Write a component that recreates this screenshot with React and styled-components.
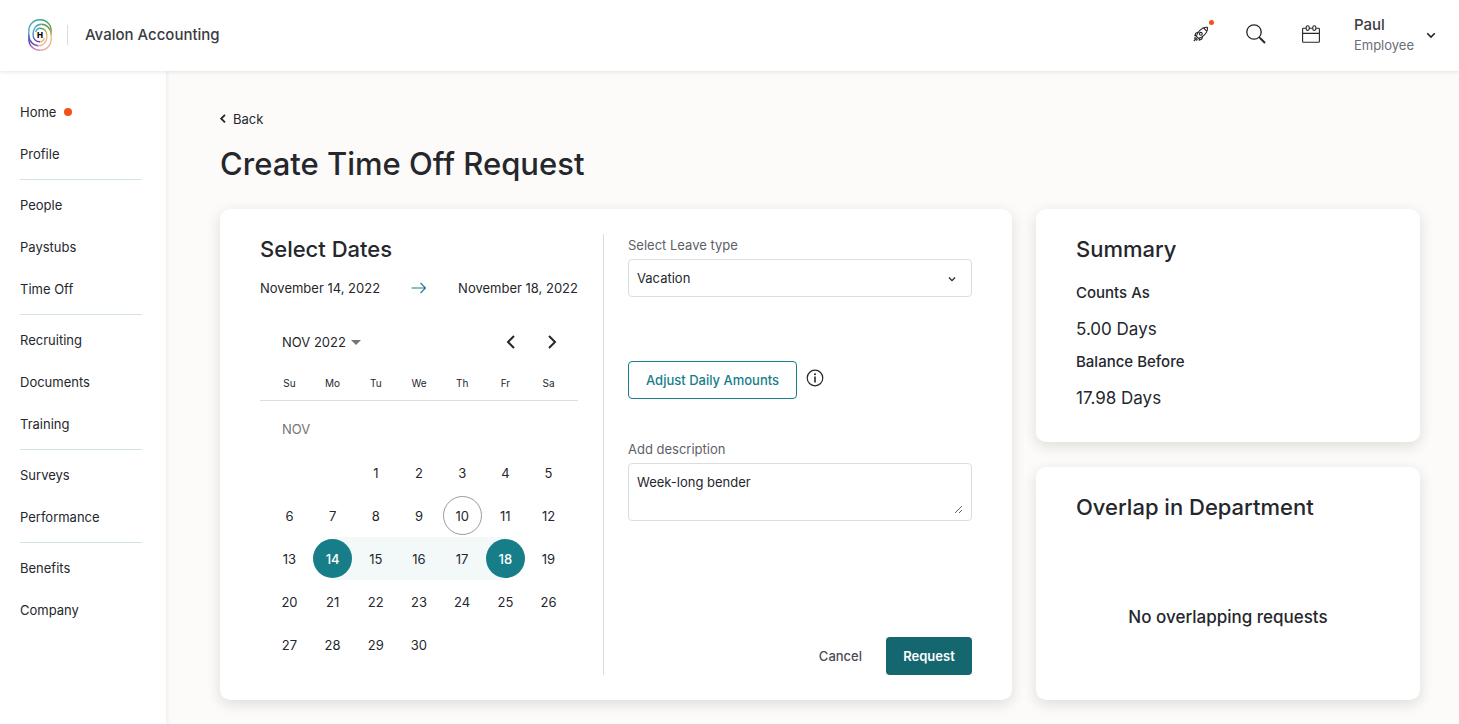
import React from 'react';
import styled, { createGlobalStyle } from 'styled-components';

const GlobalStyle = createGlobalStyle`
  *, *::before, *::after {
    box-sizing: border-box;
  }

  body {
    margin: 0;
    background: #fcfbf9;
    color: #25272d;
    font-family: Inter, "Liberation Sans", sans-serif;
    font-size: 13px;
    line-height: 20px;
  }

  button, select, textarea {
    font: inherit;
    color: inherit;
  }
`;

const navGroups = [
  [{ name: 'Home', unread: true }, { name: 'Profile' }],
  [{ name: 'People' }, { name: 'Paystubs' }, { name: 'Time Off' }],
  [{ name: 'Recruiting' }, { name: 'Documents' }, { name: 'Training' }],
  [{ name: 'Surveys' }, { name: 'Performance' }],
  [{ name: 'Benefits' }, { name: 'Company' }],
];

const weekdays = ['Su', 'Mo', 'Tu', 'We', 'Th', 'Fr', 'Sa'];

const weeks = [
  [null, null, 1, 2, 3, 4, 5],
  [6, 7, 8, 9, 10, 11, 12],
  [13, 14, 15, 16, 17, 18, 19],
  [20, 21, 22, 23, 24, 25, 26],
  [27, 28, 29, 30, null, null, null],
];

const today = 10;

function Chevron({ size = 10, direction = 'down', weight = 1.6 }) {
  const paths = {
    down: 'M1.2 3.2 L5 7 L8.8 3.2',
    left: 'M5 0.8 L1.2 4.6 L5 8.4',
  };
  return (
    <svg width={size} height={size} viewBox="0 0 10 10" fill="none" stroke="currentColor" strokeWidth={weight} aria-hidden="true">
      <path d={paths[direction]} />
    </svg>
  );
}

function Logo() {
  return (
    <svg width="24" height="32" viewBox="0 0 24 32" fill="none" strokeWidth="1.4" role="img" aria-label="Logo">
      <defs>
        <linearGradient id="logo-left" gradientUnits="userSpaceOnUse" x1="0" y1="0" x2="4" y2="32">
          <stop offset="0" stopColor="#35a79c" />
          <stop offset="0.4" stopColor="#4fa9cc" />
          <stop offset="0.72" stopColor="#5540b8" />
          <stop offset="1" stopColor="#d58fc4" />
        </linearGradient>
        <linearGradient id="logo-right" gradientUnits="userSpaceOnUse" x1="12" y1="0" x2="14" y2="32">
          <stop offset="0" stopColor="#2fa58c" />
          <stop offset="0.3" stopColor="#6e9a4a" />
          <stop offset="0.55" stopColor="#f0bd78" />
          <stop offset="1" stopColor="#f0a0b0" />
        </linearGradient>
      </defs>
      <path stroke="url(#logo-left)" d="M12 0.8 C5.5 0.8 0.8 5.5 0.8 12 V20 C0.8 26.5 5.5 31.2 12 31.2" />
      <path stroke="url(#logo-right)" d="M12 0.8 C18.5 0.8 23.2 5.5 23.2 12 V20 C23.2 26.5 18.5 31.2 12 31.2" />
      <path stroke="url(#logo-left)" d="M13.4 5.2 C8.4 5.2 5 9.6 5 15 C5 20 8 22.8 12 22.8" />
      <path stroke="url(#logo-right)" d="M13.4 5.2 C18.5 5.2 23.2 9.5 23.2 16" />
      <path stroke="url(#logo-left)" d="M0.8 16 C0.8 22.5 5.5 26.8 10.6 26.8" />
      <path stroke="url(#logo-right)" d="M10.6 26.8 C15.6 26.8 19 22.4 19 17 C19 12 16 9.2 12 9.2" />
      <path stroke="url(#logo-left)" d="M12 9.2 C9.6 9.2 8.2 10.8 7.8 13" />
      <path stroke="url(#logo-right)" d="M12 22.8 C14.4 22.8 15.8 21.2 16.2 19" />
      <text x="12" y="19" fill="#000" fontSize="8" fontWeight="800" textAnchor="middle">H</text>
    </svg>
  );
}

function RocketIcon() {
  return (
    <svg width="16" height="16" viewBox="0 0 16 16" fill="none" stroke="#25272d" strokeWidth="1.1" strokeLinejoin="round" aria-hidden="true">
      <path d="M14.4 1.4 C11.6 0.9 9 2.2 6.6 4.6 C4.8 6.4 3.8 8.2 3.4 10.4 L5.4 12.4 C7.6 12 9.4 11 11.2 9.2 C13.6 6.8 14.9 4.2 14.4 1.4 Z" />
      <path d="M10.6 2 L13.8 5.2 M5.2 6.2 L2.8 7.2 L1.8 9.8 L3.6 9.6 M9.6 10.6 L8.8 13 L6.2 14.2 L6.4 12.2" />
      <circle cx="7.8" cy="7.8" r="1.4" />
      <path d="M2.6 11.2 L1.2 12.6 M3.8 12 L0.8 15 M4.6 13.2 L3.2 14.6" />
    </svg>
  );
}

function SearchIcon() {
  return (
    <svg width="20" height="20" viewBox="0 0 20 20" fill="none" stroke="#25272d" aria-hidden="true">
      <circle cx="8" cy="8" r="7.2" strokeWidth="1.3" />
      <path d="M13 13 L14.4 14.4" strokeWidth="1.3" />
      <path d="M14 14 L19 19" strokeWidth="2" />
    </svg>
  );
}

function CalendarIcon() {
  return (
    <svg width="18" height="18" viewBox="0 0 18 18" fill="none" stroke="#25272d" strokeWidth="1.1" aria-hidden="true">
      <path d="M4 3.2 H1.4 A0.8 0.8 0 0 0 0.6 4 V16.4 A0.8 0.8 0 0 0 1.4 17.2 H16.6 A0.8 0.8 0 0 0 17.4 16.4 V4 A0.8 0.8 0 0 0 16.6 3.2 H14 M7.2 3.2 H10.8 M0.6 8.4 H17.4" />
      <rect x="4.2" y="0.8" width="3" height="4.6" rx="1.5" />
      <rect x="10.8" y="0.8" width="3" height="4.6" rx="1.5" />
    </svg>
  );
}

function InfoIcon() {
  return (
    <svg width="18" height="18" viewBox="0 0 18 18" fill="none" stroke="#25272d" aria-hidden="true">
      <circle cx="9" cy="9" r="7.8" strokeWidth="1.2" />
      <path d="M9 7.4 V13.4" strokeWidth="1.6" />
      <circle cx="9" cy="5.2" r="1" fill="#25272d" stroke="none" />
    </svg>
  );
}

function DateCalendar({ start, end, onPick }) {
  return (
    <Calendar>
      <CalendarBar>
        <PeriodButton type="button">
          NOV 2022
          <svg width="10" height="5" viewBox="0 0 10 5" aria-hidden="true"><path d="M0 0 H10 L5 5 Z" fill="#757575" /></svg>
        </PeriodButton>
        <StepButton type="button" aria-label="Previous month">
          <svg width="10" height="14" viewBox="0 0 10 14" fill="none" stroke="currentColor" strokeWidth="2" aria-hidden="true"><path d="M8 1 L2 7 L8 13" /></svg>
        </StepButton>
        <StepButton type="button" aria-label="Next month">
          <svg width="10" height="14" viewBox="0 0 10 14" fill="none" stroke="currentColor" strokeWidth="2" aria-hidden="true"><path d="M2 1 L8 7 L2 13" /></svg>
        </StepButton>
      </CalendarBar>
      <Days>
        <thead>
          <tr>
            {weekdays.map((day) => <Weekday key={day} scope="col">{day}</Weekday>)}
          </tr>
        </thead>
        <tbody>
          <tr>
            <MonthLabel colSpan={7}><span>NOV</span></MonthLabel>
          </tr>
          {weeks.map((week, index) => (
            <tr key={index}>
              {week.map((day, column) => (
                <DayCell
                  key={column}
                  $inRange={day > start && day < end}
                  $first={day === start && start !== end}
                  $last={day === end && start !== end}
                >
                  {day && (
                    <DayButton
                      type="button"
                      $selected={day === start || day === end}
                      $today={day === today}
                      onClick={() => onPick(day)}
                    >
                      {day}
                    </DayButton>
                  )}
                </DayCell>
              ))}
            </tr>
          ))}
        </tbody>
      </Days>
    </Calendar>
  );
}

function App() {
  const [range, setRange] = React.useState({ start: 14, end: 18 });
  const [leaveType, setLeaveType] = React.useState('Vacation');
  const [description, setDescription] = React.useState('Week-long bender');
  const id = React.useId();

  const handlePick = function(day) {
    if (range.start === range.end && day > range.start) {
      setRange({ start: range.start, end: day });
    } else {
      setRange({ start: day, end: day });
    }
  };

  return (
    <>
      <GlobalStyle />
      <Page>
        <Header>
          <Logo />
          <Company>Avalon Accounting</Company>
          <Tools>
            <IconButton type="button" aria-label="What's new">
              <RocketIcon />
              <Badge />
            </IconButton>
            <IconButton type="button" aria-label="Search"><SearchIcon /></IconButton>
            <IconButton type="button" aria-label="Calendar"><CalendarIcon /></IconButton>
          </Tools>
          <Account type="button">
            <span>
              <AccountName>Paul</AccountName>
              <AccountRole>Employee</AccountRole>
            </span>
            <Chevron />
          </Account>
        </Header>

        <Body>
          <Sidebar>
            {navGroups.map((group, index) => (
              <NavGroup key={index}>
                {group.map((item) => (
                  <NavLink key={item.name} href="#">
                    {item.name}
                    {item.unread && <Dot />}
                  </NavLink>
                ))}
              </NavGroup>
            ))}
          </Sidebar>

          <Main>
            <BackLink href="#">
              <Chevron size={10} direction="left" weight={1.8} />
              Back
            </BackLink>
            <Title>Create Time Off Request</Title>

            <Columns>
              <RequestCard>
                <DatesPane>
                  <CardTitle>Select Dates</CardTitle>
                  <DateRange>
                    <span>November {range.start}, 2022</span>
                    <svg width="16" height="12" viewBox="0 0 16 12" fill="none" stroke="#177e89" strokeWidth="1.1" aria-hidden="true">
                      <path d="M0.5 6 H14.5 M9.5 1 L14.5 6 L9.5 11" />
                    </svg>
                    <span>November {range.end}, 2022</span>
                  </DateRange>
                  <DateCalendar start={range.start} end={range.end} onPick={handlePick} />
                </DatesPane>

                <DetailsPane onSubmit={(e) => e.preventDefault()}>
                  <Label htmlFor={`${id}-type`}>Select Leave type</Label>
                  <SelectBox>
                    <Select id={`${id}-type`} value={leaveType} onChange={(e) => setLeaveType(e.target.value)}>
                      <option>Vacation</option>
                      <option>Sick</option>
                      <option>Personal</option>
                    </Select>
                    <SelectArrow><Chevron size={8} /></SelectArrow>
                  </SelectBox>
                  <AdjustRow>
                    <OutlineButton type="button">Adjust Daily Amounts</OutlineButton>
                    <InfoButton type="button" aria-label="About daily amounts"><InfoIcon /></InfoButton>
                  </AdjustRow>
                  <Label htmlFor={`${id}-description`}>Add description</Label>
                  <TextBox>
                    <TextArea
                      id={`${id}-description`}
                      value={description}
                      onChange={(e) => setDescription(e.target.value)}
                    />
                  </TextBox>
                  <Actions>
                    <CancelButton type="button">Cancel</CancelButton>
                    <SubmitButton type="submit">Request</SubmitButton>
                  </Actions>
                </DetailsPane>
              </RequestCard>

              <SideColumn>
                <SideCard>
                  <CardTitle>Summary</CardTitle>
                  <Stats>
                    <dt>Counts As</dt>
                    <dd>5.00 Days</dd>
                    <dt>Balance Before</dt>
                    <dd>17.98 Days</dd>
                  </Stats>
                </SideCard>
                <SideCard>
                  <CardTitle>Overlap in Department</CardTitle>
                  <Empty>No overlapping requests</Empty>
                </SideCard>
              </SideColumn>
            </Columns>
          </Main>
        </Body>
      </Page>
    </>
  );
}

const Page = styled.div`
  display: flex;
  flex-direction: column;
  min-height: 100vh;
`;

const Header = styled.header`
  position: relative;
  z-index: 2;
  display: flex;
  align-items: center;
  height: 71px;
  padding: 0 23px 2px 28px;
  background: #fff;
  box-shadow: 0 1px 4px rgba(40, 36, 30, 0.12);
`;

const Company = styled.div`
  margin-left: 15px;
  padding-left: 17px;
  border-left: 1px solid #dcdcdf;
  color: #3a3b43;
  font-size: 15px;
  font-weight: 500;
`;

const Tools = styled.div`
  display: flex;
  gap: 31px;
  margin-left: auto;
  padding-bottom: 2px;
`;

const IconButton = styled.button`
  position: relative;
  display: flex;
  align-items: center;
  justify-content: center;
  width: 24px;
  height: 24px;
  padding: 0;
  border: 0;
  background: none;
  cursor: pointer;
`;

const Badge = styled.span`
  position: absolute;
  top: -2px;
  right: -1px;
  width: 5px;
  height: 5px;
  border-radius: 50%;
  background: #f1511b;
`;

const Account = styled.button`
  display: flex;
  align-items: center;
  justify-content: space-between;
  gap: 12px;
  margin-left: 31px;
  padding: 0;
  border: 0;
  background: none;
  text-align: left;
  cursor: pointer;
`;

const AccountName = styled.span`
  display: block;
  font-size: 15px;
  font-weight: 500;
  color: #3a3b43;
`;

const AccountRole = styled.span`
  display: block;
  color: #6b6d7a;
`;

const Body = styled.div`
  display: flex;
  flex: 1;
`;

const Sidebar = styled.nav`
  flex: 0 0 166px;
  padding: 20px 24px 20px 20px;
  background: #fff;
  box-shadow: 1px 0 4px rgba(40, 36, 30, 0.08);
`;

const NavGroup = styled.div`
  & + & {
    margin-top: 4px;
    padding-top: 4px;
    border-top: 1px solid #d3e4e5;
  }
`;

const NavLink = styled.a`
  display: flex;
  align-items: center;
  gap: 8px;
  height: 42px;
  color: inherit;
  text-decoration: none;
`;

const Dot = styled.span`
  width: 8px;
  height: 8px;
  border-radius: 50%;
  background: #f1511b;
`;

const Main = styled.main`
  flex: 1;
  min-width: 0;
  padding: 38px 39px 24px 54px;
`;

const BackLink = styled.a`
  display: inline-flex;
  align-items: center;
  gap: 3px;
  color: inherit;
  text-decoration: none;
`;

const Title = styled.h1`
  margin: 15px 0 25px;
  font-size: 31px;
  font-weight: 500;
  line-height: 40px;
`;

const Columns = styled.div`
  display: grid;
  grid-template-columns: repeat(12, 1fr);
  gap: 24px;
`;

const Card = styled.section`
  border-radius: 10px;
  background: #fff;
  box-shadow: 0 4px 14px rgba(40, 36, 30, 0.14);
`;

const RequestCard = styled(Card)`
  grid-column: span 8;
  display: flex;
  padding: 25px 40px;
`;

const DatesPane = styled.div`
  flex: 0 0 343px;
  padding-right: 25px;
`;

const CardTitle = styled.h2`
  margin: 0;
  font-size: 22px;
  font-weight: 500;
  line-height: 30px;
`;

const DateRange = styled.div`
  display: flex;
  align-items: center;
  justify-content: space-between;
  margin-top: 14px;
`;

const Calendar = styled.div`
  margin: 24px 0 9px;
`;

const CalendarBar = styled.div`
  display: flex;
  align-items: center;
  height: 40px;
  padding: 0 6px 0 22px;
`;

const PeriodButton = styled.button`
  display: flex;
  align-items: center;
  gap: 5px;
  margin-right: auto;
  padding: 0;
  border: 0;
  background: none;
  cursor: pointer;
`;

const StepButton = styled.button`
  display: flex;
  align-items: center;
  justify-content: center;
  width: 41px;
  height: 40px;
  padding: 0;
  border: 0;
  background: none;
  cursor: pointer;
`;

const Days = styled.table`
  width: 100%;
  border-collapse: separate;
  border-spacing: 0;
  table-layout: fixed;

  thead th {
    border-bottom: 1px solid #dedede;
  }

  th:first-child, td:first-child {
    padding-left: 8px;
  }

  th:last-child, td:last-child {
    padding-right: 8px;
  }
`;

const Weekday = styled.th`
  height: 39px;
  padding: 0 0 10px;
  font-size: 10px;
  font-weight: 400;
  line-height: 14px;
  vertical-align: bottom;

  &:first-child, &:last-child {
    width: 51px;
  }
`;

const MonthLabel = styled.td`
  height: 50px;
  padding: 6px 0 0;
  color: #757575;

  span {
    margin-left: 14px;
  }
`;

const rangeColor = '#f3f8f9';

const DayCell = styled.td`
  height: 43px;
  padding: 0;
  text-align: center;
  background: ${({ $inRange, $first, $last }) => {
    if ($first) return `linear-gradient(to right, transparent 50%, ${rangeColor} 50%)`;
    if ($last) return `linear-gradient(to left, transparent 50%, ${rangeColor} 50%)`;
    return $inRange ? rangeColor : 'none';
  }};
`;

const DayButton = styled.button`
  width: 39px;
  height: 39px;
  padding: 0;
  border: 1px solid ${({ $today }) => ($today ? '#9b9b9b' : 'transparent')};
  border-radius: 50%;
  background: ${({ $selected }) => ($selected ? '#177e89' : 'none')};
  color: ${({ $selected }) => ($selected ? '#fff' : 'inherit')};
  font-weight: ${({ $selected }) => ($selected ? 500 : 400)};
  cursor: pointer;
`;

const DetailsPane = styled.form`
  display: flex;
  flex: 1;
  flex-direction: column;
  min-width: 0;
  padding-left: 24px;
  border-left: 1px solid #dcdcdc;
`;

const Label = styled.label`
  margin: 1px 0 4px;
  color: #5c5f6a;
`;

const SelectBox = styled.div`
  position: relative;
`;

const Select = styled.select`
  width: 100%;
  height: 38px;
  padding: 0 32px 0 8px;
  border: 1px solid #dcdddf;
  border-radius: 4px;
  background: #fff;
  appearance: none;
`;

const SelectArrow = styled.span`
  position: absolute;
  top: 16px;
  right: 16px;
  display: flex;
  pointer-events: none;
`;

const AdjustRow = styled.div`
  display: flex;
  align-items: flex-start;
  gap: 9px;
  margin: 64px 0 39px;
`;

const OutlineButton = styled.button`
  height: 38px;
  padding: 0 17px;
  border: 1px solid #177e89;
  border-radius: 4px;
  background: #fff;
  color: #177e89;
  font-weight: 500;
  cursor: pointer;
`;

const InfoButton = styled.button`
  display: flex;
  padding: 8px 0;
  border: 0;
  background: none;
  cursor: pointer;
`;

const TextBox = styled.div`
  height: 58px;
  padding: 8px;
  border: 1px solid #dcdddf;
  border-radius: 4px;
`;

const TextArea = styled.textarea`
  display: block;
  width: 100%;
  height: 42px;
  padding: 0;
  border: 0;
  outline: 0;
  background: none;
  resize: vertical;
`;

const Actions = styled.div`
  display: flex;
  justify-content: flex-end;
  gap: 24px;
  margin-top: auto;
`;

const CancelButton = styled.button`
  height: 38px;
  padding: 0;
  border: 0;
  background: none;
  color: #4b4d57;
  font-weight: 500;
  cursor: pointer;
`;

const SubmitButton = styled.button`
  min-width: 86px;
  height: 38px;
  padding: 0 16px;
  border: 0;
  border-radius: 4px;
  background: #14666f;
  color: #fff;
  font-weight: 600;
  cursor: pointer;
`;

const SideColumn = styled.div`
  grid-column: span 4;
  display: grid;
  grid-template-rows: 1fr 1fr;
  gap: 25px;
`;

const SideCard = styled(Card)`
  display: flex;
  flex-direction: column;
  padding: 25px 40px;
`;

const Stats = styled.dl`
  margin: 19px 0 0;

  dt {
    margin-top: 11px;
    font-size: 15px;
    font-weight: 500;
  }

  dt:first-child {
    margin-top: 0;
  }

  dd {
    margin: 14px 0 0;
    font-size: 17px;
    line-height: 24px;
  }
`;

const Empty = styled.p`
  margin: auto;
  padding-top: 36px;
  font-size: 17px;
  font-weight: 500;
`;

export default App;
